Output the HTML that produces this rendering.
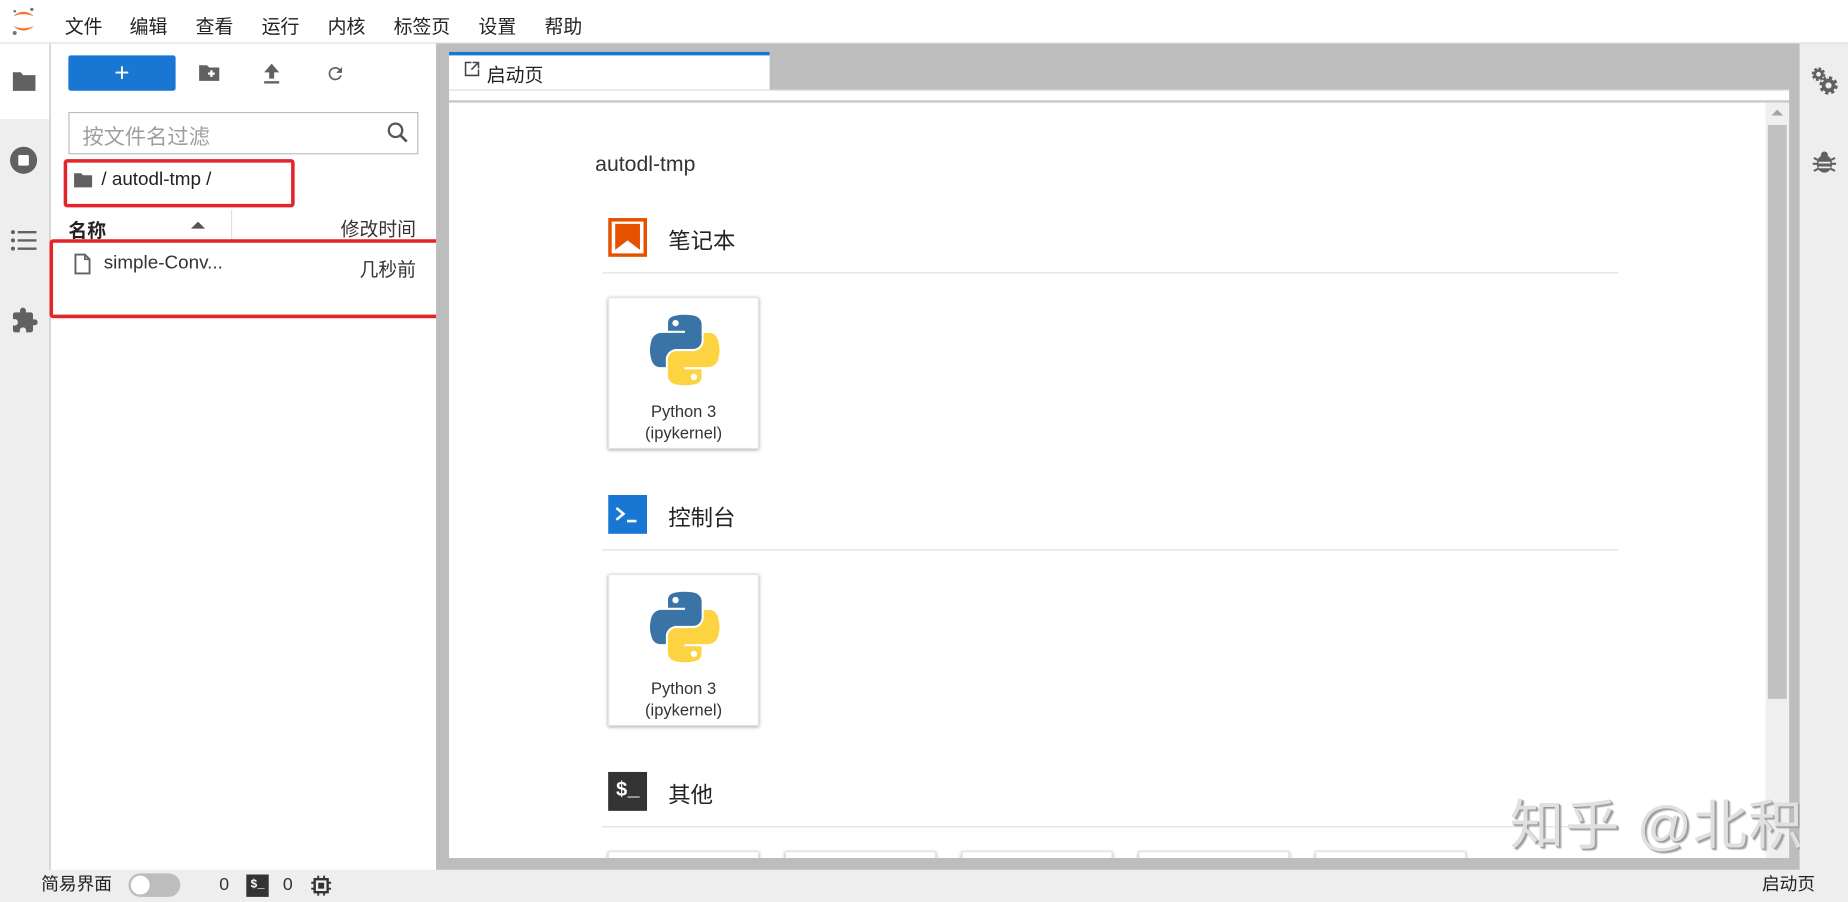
<!DOCTYPE html>
<html><head><meta charset="utf-8">
<style>
*{margin:0;padding:0;box-sizing:border-box}
html,body{width:1848px;height:902px;overflow:hidden;background:#eee}
#w{position:absolute;left:0;top:0;width:1568px;height:765px;overflow:hidden;transform:scale(1.17857);transform-origin:0 0;font-family:"Liberation Sans","Noto Sans CJK SC",sans-serif;color:#222;background:#eee}
.a{position:absolute}
.menu span{position:absolute;top:9px;font-size:16px;color:#222}
.card{position:absolute;width:128px;height:129px;background:#fff;box-shadow:0 1px 3px rgba(0,0,0,.35);border:1px solid #e4e4e4}
.card .t{position:absolute;left:0;width:100%;text-align:center;font-size:14px;color:#333;line-height:18px}
.sec{position:absolute;left:567px;font-size:19px;color:#222}
.hr{position:absolute;left:511px;width:862px;height:1px;background:#e0e0e0}
.ic{position:absolute;fill:#616161}
</style></head><body><div id="w">
<div class="a" style="left:0;top:0;width:1568px;height:37px;background:#fff;border-bottom:1px solid #ddd"></div>
<svg class="a" style="left:8px;top:5px" width="24" height="26" viewBox="0 0 24 26"><path d="M3 9 Q12 1 21 9 Q12 5 3 9z" fill="#f37726"/><path d="M3 17 Q12 25 21 17 Q12 21 3 17z" fill="#f37726"/><circle cx="19" cy="3" r="1.4" fill="#767677"/><circle cx="4.5" cy="23" r="1.7" fill="#767677"/><circle cx="4.5" cy="4.5" r="1.1" fill="#767677"/></svg>
<div class="menu"><span style="left:55px">文件</span><span style="left:110px">编辑</span><span style="left:166px">查看</span><span style="left:222px">运行</span><span style="left:278px">内核</span><span style="left:334px">标签页</span><span style="left:406px">设置</span><span style="left:462px">帮助</span></div>
<div class="a" style="left:0;top:37px;width:42px;height:64px;background:#fff"></div>
<div class="a" style="left:42px;top:37px;width:1px;height:701px;background:#bdbdbd"></div>
<svg class="ic" style="left:9px;top:59px" width="23" height="20" viewBox="0 0 24 20"><path d="M2 2h7l2 2.5h11v14H2z"/></svg>
<svg class="a" style="left:8px;top:124px" width="24" height="24" viewBox="0 0 24 24"><circle cx="12" cy="12" r="11.5" fill="#616161"/><rect x="7.5" y="7.5" width="9" height="9" rx="1" fill="#fff"/></svg>
<svg class="ic" style="left:9px;top:195px" width="22" height="18" viewBox="0 0 22 18"><circle cx="2" cy="2" r="1.7"/><circle cx="2" cy="9" r="1.7"/><circle cx="2" cy="16" r="1.7"/><rect x="6" y="1" width="16" height="2"/><rect x="6" y="8" width="16" height="2"/><rect x="6" y="15" width="16" height="2"/></svg>
<svg class="ic" style="left:9px;top:260px" width="24" height="24" viewBox="0 0 24 24"><path d="M20.5 11H19V7c0-1.1-.9-2-2-2h-4V3.5a2.5 2.5 0 0 0-5 0V5H4c-1.1 0-2 .9-2 2v3.8h1.5c1.5 0 2.7 1.2 2.7 2.7S5 16.2 3.5 16.2H2V20c0 1.1.9 2 2 2h3.8v-1.5c0-1.5 1.2-2.7 2.7-2.7s2.7 1.2 2.7 2.7V22H17c1.1 0 2-.9 2-2v-4h1.5a2.5 2.5 0 0 0 0-5z"/></svg>
<div class="a" style="left:43px;top:37px;width:327px;height:701px;background:#fff"></div>
<div class="a" style="left:58px;top:47px;width:91px;height:30px;background:#1976d2;border-radius:2px;color:#fff;font-size:22px;text-align:center;line-height:30px">+</div>
<svg class="ic" style="left:168px;top:54px" width="19" height="16" viewBox="0 0 20 16"><path d="M1 1h7l2 2h9v12H1z"/><path d="M9 8.5h6M12 5.5v6" stroke="#fff" stroke-width="2"/></svg>
<svg class="ic" style="left:223px;top:54px" width="15" height="17" viewBox="0 0 14 16"><path d="M7 0 13 7H9v5H5V7H1z"/><rect x="1" y="14" width="12" height="2"/></svg>
<svg class="a" style="left:276px;top:54px" width="17" height="17" viewBox="0 0 24 24"><path d="M17.65 6.35A7.96 7.96 0 0 0 12 4a8 8 0 1 0 7.73 10h-2.08A6 6 0 1 1 12 6c1.66 0 3.14.69 4.22 1.78L13 11h7V4z" fill="#616161"/></svg>
<div class="a" style="left:58px;top:95px;width:297px;height:36px;border:1px solid #bdbdbd"></div>
<div class="a" style="left:70px;top:102px;font-size:18px;color:#9e9e9e">按文件名过滤</div>
<svg class="a" style="left:328px;top:103px" width="19" height="19" viewBox="0 0 20 20"><circle cx="8" cy="8" r="6" fill="none" stroke="#555" stroke-width="2"/><path d="M12.5 12.5 18 18" stroke="#555" stroke-width="2.4"/></svg>
<svg class="ic" style="left:62px;top:146px" width="17" height="14" viewBox="0 0 20 16"><path d="M1 1h7l2 2h9v12H1z"/></svg>
<div class="a" style="left:86px;top:144px;font-size:16px;color:#222">/ autodl-tmp /</div>
<div class="a" style="left:54px;top:135px;width:196px;height:41px;border:3px solid #e3242b;border-radius:3px"></div>
<div class="a" style="left:43px;top:205px;width:327px;height:1px;background:#e0e0e0"></div>
<div class="a" style="left:196px;top:178px;width:1px;height:27px;background:#e0e0e0"></div>
<div class="a" style="left:58px;top:182px;font-size:16px;font-weight:bold;color:#222">名称</div>
<div class="a" style="left:162px;top:188px;width:0;height:0;border-left:6px solid transparent;border-right:6px solid transparent;border-bottom:6px solid #555"></div>
<div class="a" style="left:289px;top:181px;font-size:16px;color:#333">修改时间</div>
<svg class="a" style="left:63px;top:215px" width="14" height="18" viewBox="0 0 14 18"><path d="M1 1h8l4 4v12H1z" fill="none" stroke="#616161" stroke-width="1.6"/><path d="M9 1v4h4" fill="none" stroke="#616161" stroke-width="1.4"/></svg>
<div class="a" style="left:88px;top:215px;font-size:16px;color:#333">simple-Conv...</div>
<div class="a" style="left:305px;top:215px;font-size:16px;color:#333">几秒前</div>
<div class="a" style="left:42px;top:203px;width:332px;height:67px;border:3px solid #e3242b;border-radius:3px"></div>
<div class="a" style="left:370px;top:37px;width:1157px;height:701px;background:#bdbdbd"></div>
<div class="a" style="left:381px;top:44px;width:272px;height:32px;background:#fff;border-top:3px solid #1976d2"></div>
<svg class="a" style="left:394px;top:52px" width="13" height="13" viewBox="0 0 13 13"><path d="M6 1H1v11h11V7" fill="none" stroke="#444" stroke-width="1.3"/><path d="M7 1h5v5M12 1 6 7" fill="none" stroke="#444" stroke-width="1.3"/></svg>
<div class="a" style="left:413px;top:50px;font-size:16px;color:#222">启动页</div>
<div class="a" style="left:381px;top:76px;width:1137px;height:10px;background:#fff;border-top:1px solid #ddd;border-bottom:1px solid #ccc"></div>
<div class="a" style="left:381px;top:87px;width:1137px;height:641px;background:#fff"></div>
<div class="a" style="left:1498px;top:87px;width:20px;height:641px;background:#f0f0f0"></div>
<div class="a" style="left:1500px;top:106px;width:16px;height:487px;background:#c1c1c1"></div>
<div class="a" style="left:1503px;top:93px;width:0;height:0;border-left:5px solid transparent;border-right:5px solid transparent;border-bottom:5px solid #a3a3a3"></div>
<div class="a" style="left:505px;top:129px;font-size:18px;color:#333">autodl-tmp</div>
<svg class="a" style="left:516px;top:185px" width="33" height="33" viewBox="0 0 33 33"><rect x="1.5" y="1.5" width="30" height="30" fill="#fff" stroke="#e65100" stroke-width="3"/><path d="M6 5h21v22l-10.5-8L6 27z" fill="#e65100"/></svg>
<div class="sec" style="top:190px">笔记本</div>
<div class="hr" style="top:231px"></div>
<div class="card" style="left:516px;top:252px"><svg class="a" style="left:34px;top:14px" width="60" height="60" viewBox="0 0 110 110"><path d="M54.9.1C50.3.1 46 .5 42.2 1.2 31 3.1 29 7.3 29 14.9v10.1h26.3v3.4H19.1c-7.6 0-14.3 4.6-16.4 13.3-2.4 10-2.5 16.2 0 26.6 1.9 7.8 6.3 13.3 13.9 13.3h9v-12c0-8.7 7.5-16.3 16.4-16.3h26.2c7.3 0 13.1-6 13.1-13.3V14.9c0-7.1-6-12.4-13.1-13.6C63.7.5 59 .1 54.9.1zM40.7 8.2c2.7 0 4.9 2.2 4.9 5 0 2.7-2.2 4.9-4.9 4.9-2.7 0-4.9-2.2-4.9-4.9 0-2.8 2.2-5 4.9-5z" fill="#3a73a6"/><path transform="rotate(180 55 55)" d="M54.9.1C50.3.1 46 .5 42.2 1.2 31 3.1 29 7.3 29 14.9v10.1h26.3v3.4H19.1c-7.6 0-14.3 4.6-16.4 13.3-2.4 10-2.5 16.2 0 26.6 1.9 7.8 6.3 13.3 13.9 13.3h9v-12c0-8.7 7.5-16.3 16.4-16.3h26.2c7.3 0 13.1-6 13.1-13.3V14.9c0-7.1-6-12.4-13.1-13.6C63.7.5 59 .1 54.9.1zM40.7 8.2c2.7 0 4.9 2.2 4.9 5 0 2.7-2.2 4.9-4.9 4.9-2.7 0-4.9-2.2-4.9-4.9 0-2.8 2.2-5 4.9-5z" fill="#fed342"/></svg><div class="t" style="top:87px">Python 3<br>(ipykernel)</div></div>
<svg class="a" style="left:516px;top:420px" width="33" height="33" viewBox="0 0 33 33"><rect width="33" height="33" fill="#1976d2"/><path d="M7 11l6 5-6 5" fill="none" stroke="#fff" stroke-width="2.2"/><rect x="16" y="21" width="8" height="2.2" fill="#fff"/></svg>
<div class="sec" style="top:425px">控制台</div>
<div class="hr" style="top:466px"></div>
<div class="card" style="left:516px;top:487px"><svg class="a" style="left:34px;top:14px" width="60" height="60" viewBox="0 0 110 110"><path d="M54.9.1C50.3.1 46 .5 42.2 1.2 31 3.1 29 7.3 29 14.9v10.1h26.3v3.4H19.1c-7.6 0-14.3 4.6-16.4 13.3-2.4 10-2.5 16.2 0 26.6 1.9 7.8 6.3 13.3 13.9 13.3h9v-12c0-8.7 7.5-16.3 16.4-16.3h26.2c7.3 0 13.1-6 13.1-13.3V14.9c0-7.1-6-12.4-13.1-13.6C63.7.5 59 .1 54.9.1zM40.7 8.2c2.7 0 4.9 2.2 4.9 5 0 2.7-2.2 4.9-4.9 4.9-2.7 0-4.9-2.2-4.9-4.9 0-2.8 2.2-5 4.9-5z" fill="#3a73a6"/><path transform="rotate(180 55 55)" d="M54.9.1C50.3.1 46 .5 42.2 1.2 31 3.1 29 7.3 29 14.9v10.1h26.3v3.4H19.1c-7.6 0-14.3 4.6-16.4 13.3-2.4 10-2.5 16.2 0 26.6 1.9 7.8 6.3 13.3 13.9 13.3h9v-12c0-8.7 7.5-16.3 16.4-16.3h26.2c7.3 0 13.1-6 13.1-13.3V14.9c0-7.1-6-12.4-13.1-13.6C63.7.5 59 .1 54.9.1zM40.7 8.2c2.7 0 4.9 2.2 4.9 5 0 2.7-2.2 4.9-4.9 4.9-2.7 0-4.9-2.2-4.9-4.9 0-2.8 2.2-5 4.9-5z" fill="#fed342"/></svg><div class="t" style="top:87px">Python 3<br>(ipykernel)</div></div>
<div class="a" style="left:516px;top:655px;width:33px;height:33px;background:#333;color:#fff;font-size:17px;font-weight:bold;line-height:33px;text-align:center;font-family:'Liberation Mono',monospace">$_</div>
<div class="sec" style="top:660px">其他</div>
<div class="hr" style="top:701px"></div>
<div class="a" style="left:381px;top:721px;width:1117px;height:7px;overflow:hidden">
<div class="card" style="left:135px;top:1px"></div><div class="card" style="left:285px;top:1px"></div><div class="card" style="left:435px;top:1px"></div><div class="card" style="left:585px;top:1px"></div><div class="card" style="left:735px;top:1px"></div>
</div>
<div class="a" style="left:1281px;top:672px;font-size:46px;line-height:56px;color:#e0e0e0;text-shadow:1px 1px 0 #999,2px 2px 1px #aaa;letter-spacing:1px;white-space:nowrap">知乎 @北积</div>
<div class="a" style="left:1527px;top:37px;width:41px;height:701px;background:#eee"></div>
<svg class="a" style="left:1536px;top:57px" width="24" height="24" viewBox="0 0 24 24"><circle cx="7" cy="6" r="3.2" fill="none" stroke="#616161" stroke-width="2.4"/><circle cx="7" cy="6" r="4.8" fill="none" stroke="#616161" stroke-width="2" stroke-dasharray="2.2 1.55"/><circle cx="15.5" cy="15.5" r="4.2" fill="none" stroke="#616161" stroke-width="3.2"/><circle cx="15.5" cy="15.5" r="6.6" fill="none" stroke="#616161" stroke-width="2.4" stroke-dasharray="2.8 2.4"/></svg>
<svg class="ic" style="left:1538px;top:127px" width="20" height="21" viewBox="0 0 20 21"><ellipse cx="10" cy="12" rx="6.5" ry="7.5"/><circle cx="10" cy="4.5" r="3"/><path d="M1 7l4 2M19 7l-4 2M0 12h4M20 12h-4M1 18l4-2M19 18l-4-2" stroke="#616161" stroke-width="1.8"/><path d="M5 11h10M5 15h10" stroke="#eee" stroke-width="1.5"/></svg>
<div class="a" style="left:35px;top:742px;font-size:15px;line-height:18px;color:#222">简易界面</div>
<div class="a" style="left:109px;top:741px;width:44px;height:20px;border-radius:10px;background:#bdbdbd"></div>
<div class="a" style="left:111px;top:743px;width:16px;height:16px;border-radius:8px;background:#fff"></div>
<div class="a" style="left:186px;top:742px;font-size:15px;line-height:18px;color:#333">0</div>
<div class="a" style="left:209px;top:742px;width:19px;height:19px;background:#333;color:#fff;font-size:10px;font-weight:bold;line-height:19px;text-align:center;font-family:'Liberation Mono',monospace">$_</div>
<div class="a" style="left:240px;top:742px;font-size:15px;line-height:18px;color:#333">0</div>
<svg class="a" style="left:264px;top:743px" width="17" height="17" viewBox="0 0 17 17"><rect x="3" y="3" width="11" height="11" fill="none" stroke="#333" stroke-width="2"/><rect x="6" y="6" width="5" height="5" fill="#333"/><path d="M6 0v3M11 0v3M6 14v3M11 14v3M0 6h3M0 11h3M14 6h3M14 11h3" stroke="#333" stroke-width="1.6"/></svg>
<div class="a" style="left:1495px;top:742px;font-size:15px;line-height:18px;color:#222">启动页</div>
</div></body></html>
